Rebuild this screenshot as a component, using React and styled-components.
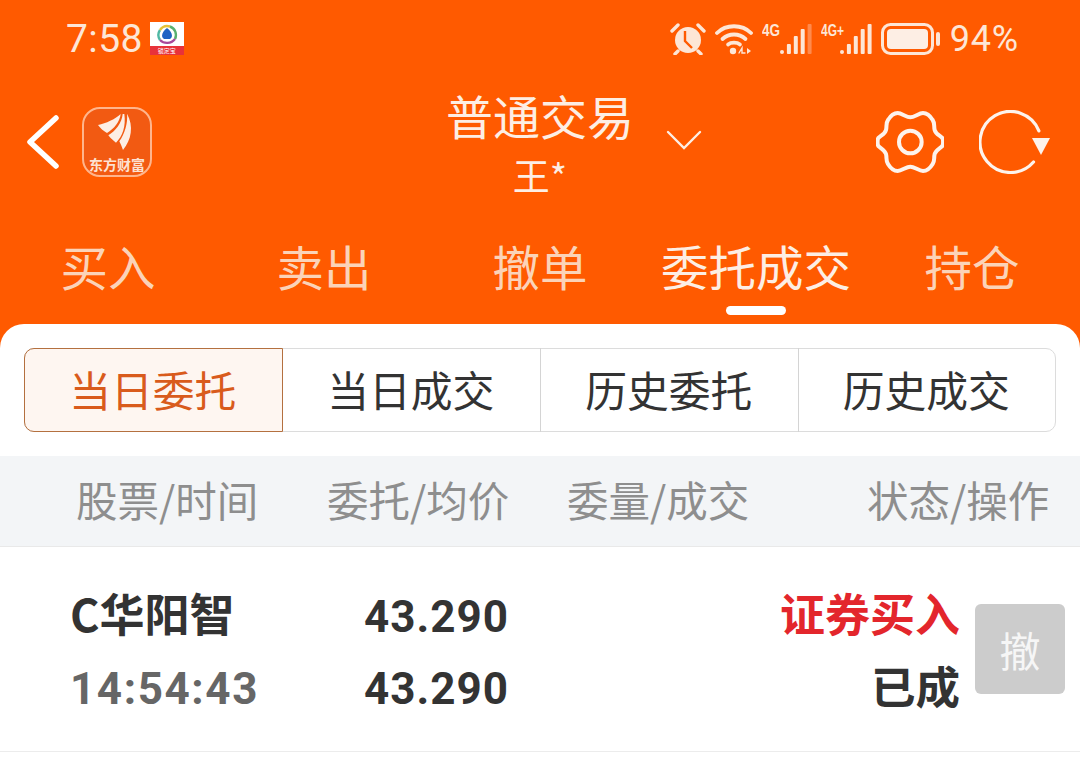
import React from "react";
import styled, { createGlobalStyle } from "styled-components";

const GlobalStyle = createGlobalStyle`
  html, body { margin: 0; padding: 0; height: 100%; background: #ff5a00; overflow: hidden; }
  * { box-sizing: border-box; }
  body { font-family: "Noto Sans CJK SC", "Noto Sans", sans-serif; }
`;

const Page = styled.div`
  width: 1080px;
  height: 762px;
  display: flex;
  flex-direction: column;
  background: #ff5a00;
  color: #fff;
`;

const StatusBar = styled.div`
  height: 78px;
  display: flex;
  align-items: center;
  padding: 0 61px 0 66px;
  color: #fde6d6;
`;

const Clock = styled.span`
  font-family: "Roboto", sans-serif;
  font-size: 39px;
  letter-spacing: 0.4px;
  line-height: 1;
`;

const NoticeIcon = styled.div`
  width: 34px;
  height: 33px;
  margin-left: 7px;
  margin-top: -2px;
  background: #fff;
  display: flex;
  flex-direction: column;
  justify-content: flex-end;
  align-items: center;
`;

const NoticeBand = styled.div`
  width: 100%;
  height: 9px;
  background: #e8323a;
  color: #fff;
  font-size: 6px;
  line-height: 9px;
  text-align: center;
`;

const StatusIcons = styled.div`
  margin-left: auto;
  display: flex;
  align-items: center;
  gap: 9px;
`;

const Percent = styled.span`
  font-family: "Roboto", sans-serif;
  font-size: 36px;
  letter-spacing: 0.8px;
  line-height: 1;
`;

const NavBar = styled.div`
  height: 152px;
  display: flex;
  align-items: center;
  padding: 0 30px 0 27px;
`;

const NavLeft = styled.div`
  width: 405px;
  display: flex;
  align-items: center;
  gap: 23px;
  margin-top: -24px;
`;

const Logo = styled.div`
  width: 70px;
  height: 70px;
  border-radius: 18px;
  border: 2px solid #ffb58c;
  background: #f25a12;
  display: flex;
  flex-direction: column;
  align-items: center;
  overflow: hidden;
`;

const LogoText = styled.span`
  font-size: 14px;
  font-weight: 700;
  line-height: 16px;
  color: #fde2d2;
  white-space: nowrap;
`;

const Title = styled.div`
  width: 216px;
  text-align: center;
  margin-top: -32px;
`;

const TitleMain = styled.div`
  font-size: 47px;
  line-height: 74px;
  color: #fdeee4;
`;

const TitleSub = styled.div`
  font-size: 37px;
  line-height: 46px;
  color: #fdeee4;
`;

const Chevron = styled.svg`
  margin-left: 18px;
  margin-top: -28px;
`;

const NavRight = styled.div`
  margin-left: auto;
  margin-top: -24px;
  display: flex;
  align-items: center;
  gap: 35px;
`;

const MainTabs = styled.div`
  height: 94px;
  display: grid;
  grid-template-columns: repeat(5, 216px);
`;

const MainTab = styled.div`
  position: relative;
  text-align: center;
  font-size: 47.5px;
  line-height: 72px;
  color: ${(p) => (p.$active ? "#fdeee4" : "#fbd3b8")};
`;

const TabMark = styled.div`
  position: absolute;
  left: 78px;
  bottom: 9px;
  width: 60px;
  height: 9px;
  border-radius: 5px;
  background: #fff;
`;

const Sheet = styled.div`
  flex: 1;
  background: #fff;
  border-radius: 24px 24px 0 0;
  padding-top: 24px;
`;

const Segments = styled.div`
  margin: 0 24px;
  height: 84px;
  display: grid;
  grid-template-columns: repeat(4, 1fr);
  border: 1px solid #dcdcdc;
  border-radius: 10px;
`;

const Segment = styled.div`
  display: flex;
  align-items: center;
  justify-content: center;
  margin: -1px 0;
  padding: 0 1px 2px 0;
  font-size: 41.8px;
  color: ${(p) => (p.$active ? "#d95b1c" : "#333")};
  background: ${(p) => (p.$active ? "#fef6f1" : "transparent")};
  border: ${(p) => (p.$active ? "1px solid #b4703f" : "none")};
  border-left: ${(p) => (p.$active ? "1px solid #b4703f" : "1px solid #d4d4d4")};
  border-radius: ${(p) => (p.$active ? "10px 0 0 10px" : "0")};
  margin-left: ${(p) => (p.$active ? "-1px" : "0")};
  &:first-child + div { border-left: none; }
`;

const TableHead = styled.div`
  margin-top: 24px;
  height: 91px;
  display: grid;
  grid-template-columns: 251px 240px 300px 1fr;
  align-items: center;
  padding: 0 0 4px 76px;
  background: #f3f5f7;
  border-bottom: 1px solid #e9e9e9;
  font-size: 41.5px;
  color: #8e8e8e;
  white-space: nowrap;
`;

const Row = styled.div`
  height: 205px;
  display: flex;
  align-items: center;
  padding: 0 15px 0 70px;
  border-bottom: 1px solid #ececec;
`;

const Column = styled.div`
  width: ${(p) => p.$width}px;
  display: flex;
  flex-direction: column;
  align-items: ${(p) => (p.$right ? "flex-end" : "flex-start")};
  padding-top: 7px;
`;

const Cell = styled.div`
  height: 72px;
  line-height: ${(p) => (p.$num ? 72 : 64)}px;
  font-weight: 700;
  font-size: ${(p) => p.$size || 44}px;
  color: ${(p) => p.$color || "#333"};
  font-family: ${(p) => (p.$num ? '"Roboto", sans-serif' : "inherit")};
  letter-spacing: ${(p) => (p.$spacing ? `${p.$spacing}px` : "0")};
  white-space: nowrap;
`;

const StatusColumn = styled(Column)`
  flex: 1;
  width: auto;
  margin-right: 15px;
`;

const CancelButton = styled.div`
  width: 90px;
  height: 90px;
  margin-top: -1px;
  border-radius: 6px;
  background: #cccccc;
  color: #f6f6f6;
  font-size: 41px;
  display: flex;
  align-items: center;
  justify-content: center;
`;

const NoticeMark = () => (
  <svg width="24" height="23" viewBox="0 0 24 23" fill="none">
    <path d="M5 17A9 9 0 0 1 5 7" stroke="#4fb8a4" strokeWidth="2.4" />
    <path d="M5 7A9 9 0 0 1 15 3.5" stroke="#e6c23a" strokeWidth="2.4" />
    <path d="M15 3.5A9 9 0 0 1 20 16" stroke="#58b070" strokeWidth="2.4" />
    <path d="M5 17c4 4 11 4 15-1" stroke="#a8489a" strokeWidth="2.4" />
    <path d="M12 5c3 2 5 5 5 8a4 4 0 0 1-2 3H9a4 4 0 0 1-2-3c0-3 2-6 5-8z" fill="#1d62c4" />
  </svg>
);

const AlarmIcon = () => (
  <svg width="36" height="32" viewBox="0 0 36 32">
    <circle cx="18" cy="17" r="13" fill="#fde6d6" />
    <path d="M15 8v10l7 7" fill="none" stroke="#ff5a00" strokeWidth="2.4" />
    <path d="M2 8l6-6M34 8l-6-6M8 28l-3 3M28 28l3 3" stroke="#fde6d6" strokeWidth="3.4" strokeLinecap="round" />
  </svg>
);

const WifiIcon = () => (
  <svg width="38" height="32" viewBox="0 0 38 32" fill="none" stroke="#fde6d6" strokeLinecap="round">
    <path d="M2 10C11 1 27 1 36 10" strokeWidth="3.8" />
    <path d="M7.5 16C14 10 24 10 30.5 16" strokeWidth="3.8" />
    <path d="M13 21.5C16 19 22 19 25 21.5" strokeWidth="3.6" />
    <circle cx="18" cy="28" r="3.2" fill="#fde6d6" stroke="none" />
    <path d="M24 30l3-5v5h3" strokeWidth="1.4" />
    <path d="M32 25v6l4-3z" fill="#fde6d6" stroke="none" />
  </svg>
);

// 4G label with the signal bars, dim marks the last bar as empty
const SignalIcon = ({ label, dim, width, labelWidth }) => (
  <svg width={width} height="32" viewBox={`0 0 ${width} 32`}>
    <text
      x="0"
      y="13"
      fontFamily="Liberation Sans, sans-serif"
      fontSize="16"
      fontWeight="700"
      fill="#fde6d6"
      textLength={labelWidth}
      lengthAdjust="spacingAndGlyphs"
    >
      {label}
    </text>
    {[4, 10, 18, 25, 30].map((h, i) => (
      <rect
        key={h}
        x={width - 32 + i * 6.9}
        y={31 - h}
        width="4"
        height={h}
        rx={i === 0 ? 2 : 1}
        fill={dim && i === 4 ? "#ff8a4d" : "#fde6d6"}
      />
    ))}
  </svg>
);

const BatteryIcon = () => (
  <svg width="60" height="32" viewBox="0 0 60 32">
    <rect x="1.5" y="1.5" width="50" height="29" rx="8" fill="none" stroke="#fde6d6" strokeWidth="3" />
    <rect x="6" y="6" width="41" height="20" rx="4" fill="#fdeee4" />
    <rect x="55" y="9" width="4" height="14" rx="2" fill="#fde6d6" />
  </svg>
);

const BackIcon = () => (
  <svg width="32" height="54" viewBox="0 0 32 54" fill="none" stroke="#fff" strokeWidth="5.5" strokeLinecap="round" strokeLinejoin="round">
    <path d="M29 3L3 27l26 24" />
  </svg>
);

const LogoMark = () => (
  <svg width="66" height="47" viewBox="18 18 198 141" fill="#fdeee4">
    <path d="M60 66C85 60 110 50 128 33C126 55 108 78 87 90C76 84 67 76 60 66z" />
    <path d="M134 33C132 60 112 84 91 97C98 106 106 113 114 119C134 100 144 70 139 33z" />
    <path d="M147 32C150 60 140 92 124 115C128 124 132 132 135 141C160 110 168 70 147 32z" />
  </svg>
);

const GearIcon = () => (
  <svg width="68" height="64" viewBox="21 24 204 192" fill="none" stroke="#fdf3ec" strokeWidth="12" strokeLinejoin="round">
    <path d="M28 108C36 100 48 96 51 84C54 72 50 64 57 54C63 44 74 33 86 33C98 33 112 46 124 46C136 46 150 33 162 33C174 33 185 44 191 54C198 64 194 72 197 84C200 96 212 100 220 108C223 112 223 128 220 132C212 140 200 144 197 156C194 168 198 176 191 186C185 196 174 207 162 207C150 207 136 194 124 194C112 194 98 207 86 207C74 207 63 196 57 186C50 176 54 168 51 156C48 144 36 140 28 132C25 128 25 112 28 108z" />
    <circle cx="124" cy="120" r="34" />
  </svg>
);

const RefreshIcon = () => (
  <svg width="71" height="64" viewBox="0 0 71 64" fill="none">
    <path d="M59.9 20.9A30.5 30.5 0 1 0 54.5 52" stroke="#fdf3ec" strokeWidth="3.2" strokeLinecap="round" />
    <path d="M53 28h18L62 45z" fill="#fdf3ec" />
  </svg>
);

const tabs = ["买入", "卖出", "撤单", "委托成交", "持仓"];
const segments = ["当日委托", "当日成交", "历史委托", "历史成交"];
const heads = ["股票/时间", "委托/均价", "委量/成交", "状态/操作"];

export default function App() {
  return (
    <Page>
      <GlobalStyle />
      <StatusBar>
        <Clock>7:58</Clock>
        <NoticeIcon>
          <NoticeMark />
          <NoticeBand>锁定宝</NoticeBand>
        </NoticeIcon>
        <StatusIcons>
          <AlarmIcon />
          <WifiIcon />
          <SignalIcon label="4G" dim width={50} labelWidth={18} />
          <SignalIcon label="4G+" width={51} labelWidth={23} />
          <BatteryIcon />
          <Percent>94%</Percent>
        </StatusIcons>
      </StatusBar>

      <NavBar>
        <NavLeft>
          <BackIcon />
          <Logo>
            <LogoMark />
            <LogoText>东方财富</LogoText>
          </Logo>
        </NavLeft>
        <Title>
          <TitleMain>普通交易</TitleMain>
          <TitleSub>王*</TitleSub>
        </Title>
        <Chevron width="36" height="20" viewBox="0 0 36 20" fill="none" stroke="#fdeee4" strokeWidth="2.4" strokeLinecap="round">
          <path d="M2 2l16 16L34 2" />
        </Chevron>
        <NavRight>
          <GearIcon />
          <RefreshIcon />
        </NavRight>
      </NavBar>

      <MainTabs>
        {tabs.map((t, i) => (
          <MainTab key={t} $active={i === 3}>
            {t}
            {i === 3 && <TabMark />}
          </MainTab>
        ))}
      </MainTabs>

      <Sheet>
        <Segments>
          {segments.map((s, i) => (
            <Segment key={s} $active={i === 0}>{s}</Segment>
          ))}
        </Segments>
        <TableHead>
          {heads.map((h) => (
            <span key={h}>{h}</span>
          ))}
        </TableHead>
        <Row>
          <Column $width={200}>
            <Cell $size={45}>C华阳智</Cell>
            <Cell $num $spacing={1.6} $color="#666">14:54:43</Cell>
          </Column>
          <Column $width={239} $right>
            <Cell $num $spacing={1}>43.290</Cell>
            <Cell $num $spacing={1}>43.290</Cell>
          </Column>
          <StatusColumn $right>
            <Cell $size={45} $color="#e3262c">证券买入</Cell>
            <Cell $size={44.5}>已成</Cell>
          </StatusColumn>
          <CancelButton>撤</CancelButton>
        </Row>
      </Sheet>
    </Page>
  );
}
